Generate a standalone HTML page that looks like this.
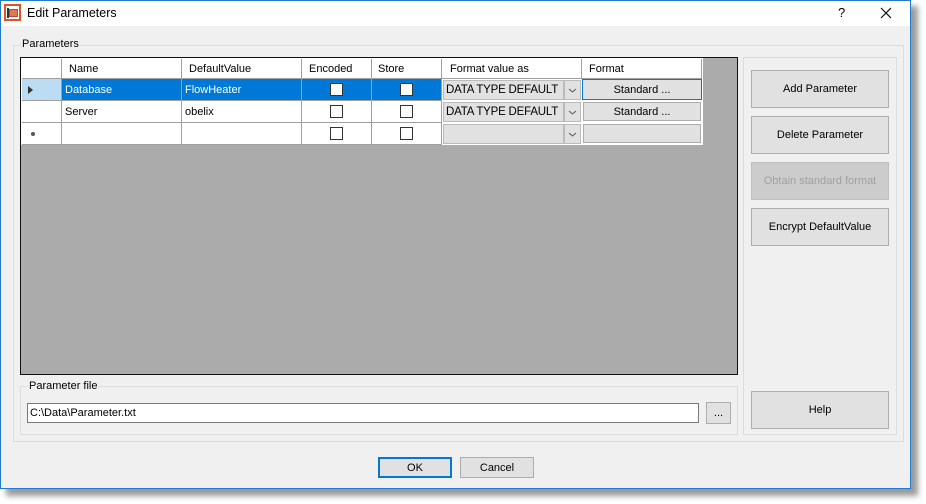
<!DOCTYPE html>
<html><head><style>
*{box-sizing:border-box;margin:0;padding:0}
body{width:926px;height:504px;background:#fff;position:relative;overflow:hidden;font-family:"Liberation Sans",sans-serif;font-size:11px;color:#000}
.a{position:absolute;white-space:nowrap}
.btn{position:absolute;background:#e1e1e1;border:1px solid #adadad;display:flex;align-items:center;justify-content:center;font-size:11px;white-space:nowrap}
.cell{position:absolute;border-right:1px solid #a0a0a0;border-bottom:1px solid #a0a0a0;background:#fff;display:flex;align-items:center;padding-left:3px;white-space:nowrap;overflow:hidden}
.cb{position:absolute;width:13px;height:13px;border:1px solid #333;background:#fff}
.grp{position:absolute;border:1px solid #dcdcdc}
.lbl{position:absolute;background:#f0f0f0;padding:0 1px;font-size:11px;line-height:13px}
.dd{position:absolute;width:17px;height:20px;background:#e1e1e1;border:1px solid #bbb}
.cmb{position:absolute;width:121px;height:20px;background:#e1e1e1;border:1px solid #bbb;padding-left:2px;line-height:18px;font-size:11.5px;letter-spacing:-0.2px;white-space:nowrap;overflow:hidden}
</style></head><body>
<div class="a" style="left:6px;top:6px;width:912px;height:490px;background:#9a9a9a;filter:blur(3px)"></div>
<div class="a" style="left:0;top:0;width:911px;height:489px;border:1px solid #1e7ad2;background:#f0f0f0"></div>
<div class="a" style="left:1px;top:1px;width:909px;height:25px;background:#fff"></div>
<div class="a" style="left:4px;top:4px;width:17px;height:17px;border:2px solid #e0532a;background:#fff"></div>
<div class="a" style="left:9px;top:9px;width:9px;height:8px;background:#e0794f;border:1px solid #b44"></div>
<div class="a" style="left:7px;top:8px;width:2px;height:10px;background:#333"></div>
<div class="a" style="left:27px;top:5px;font-size:12.5px;line-height:16px">Edit Parameters</div>
<div class="a" style="left:838px;top:5px;font-size:13px">?</div>
<svg class="a" style="left:880px;top:7px" width="12" height="12"><path d="M1 1L11 11M11 1L1 11" stroke="#111" stroke-width="1.2"/></svg>

<div class="grp" style="left:13px;top:45px;width:891px;height:397px"></div>
<div class="lbl" style="left:21px;top:38px">Parameters</div>

<div class="a" style="left:20px;top:57px;width:718px;height:318px;border:1px solid #111;background:#ababab"></div>
<div class="a" style="left:21px;top:58px;width:682px;height:87px;background:#fff"></div>
<div class="cell" style="left:22px;top:59px;width:40px;height:20px"></div>
<div class="cell" style="left:62px;top:59px;width:120px;height:20px;padding-left:7px">Name</div>
<div class="cell" style="left:182px;top:59px;width:120px;height:20px;padding-left:7px">DefaultValue</div>
<div class="cell" style="left:302px;top:59px;width:70px;height:20px;padding-left:7px">Encoded</div>
<div class="cell" style="left:372px;top:59px;width:70px;height:20px;padding-left:6px">Store</div>
<div class="cell" style="left:442px;top:59px;width:140px;height:20px;padding-left:8px">Format value as</div>
<div class="cell" style="left:582px;top:59px;width:120px;height:20px;padding-left:7px">Format</div>
<div class="cell" style="left:22px;top:79px;width:40px;height:22px;background:#bcdcf4"></div>
<div class="a" style="left:28px;top:86px;width:0;height:0;border-left:5px solid #333;border-top:4px solid transparent;border-bottom:4px solid transparent"></div>
<div class="cell" style="left:62px;top:79px;width:120px;height:22px;background:#0078d7;color:#fff">Database</div>
<div class="cell" style="left:182px;top:79px;width:120px;height:22px;background:#0078d7;color:#fff">FlowHeater</div>
<div class="cell" style="left:302px;top:79px;width:70px;height:22px;background:#0078d7"></div>
<div class="cell" style="left:372px;top:79px;width:70px;height:22px;background:#0078d7"></div>
<div class="cell" style="left:22px;top:101px;width:40px;height:22px"></div>
<div class="cell" style="left:62px;top:101px;width:120px;height:22px">Server</div>
<div class="cell" style="left:182px;top:101px;width:120px;height:22px">obelix</div>
<div class="cell" style="left:302px;top:101px;width:70px;height:22px"></div>
<div class="cell" style="left:372px;top:101px;width:70px;height:22px"></div>
<div class="cell" style="left:22px;top:123px;width:40px;height:22px"></div>
<div class="a" style="left:31px;top:132px;width:4px;height:4px;border-radius:2px;background:#555"></div>
<div class="cell" style="left:62px;top:123px;width:120px;height:22px"></div>
<div class="cell" style="left:182px;top:123px;width:120px;height:22px"></div>
<div class="cell" style="left:302px;top:123px;width:70px;height:22px"></div>
<div class="cell" style="left:372px;top:123px;width:70px;height:22px"></div>
<div class="cb" style="left:330px;top:83px"></div><div class="cb" style="left:400px;top:83px"></div>
<div class="cb" style="left:330px;top:105px"></div><div class="cb" style="left:400px;top:105px"></div>
<div class="cb" style="left:330px;top:127px"></div><div class="cb" style="left:400px;top:127px"></div>
<div class="a" style="left:442px;top:79px;width:140px;height:66px;background:#fff"></div>
<div class="cmb" style="left:443px;top:80px">DATA TYPE DEFAULT</div>
<div class="dd" style="left:564px;top:80px"><svg width="15" height="18"><path d="M4 8L7.5 11L11 8" stroke="#555" fill="none"/></svg></div>
<div class="cmb" style="left:443px;top:102px">DATA TYPE DEFAULT</div>
<div class="dd" style="left:564px;top:102px"><svg width="15" height="18"><path d="M4 8L7.5 11L11 8" stroke="#555" fill="none"/></svg></div>
<div class="cmb" style="left:443px;top:124px"></div>
<div class="dd" style="left:564px;top:124px"><svg width="15" height="18"><path d="M4 8L7.5 11L11 8" stroke="#555" fill="none"/></svg></div>
<div class="a" style="left:582px;top:79px;width:121px;height:66px;background:#fff"></div>
<div class="btn" style="left:582px;top:79px;width:120px;height:21px;border:1px solid #0078d7">Standard ...</div>
<div class="btn" style="left:583px;top:102px;width:118px;height:19px">Standard ...</div>
<div class="btn" style="left:583px;top:124px;width:118px;height:19px"></div>

<div class="grp" style="left:743px;top:57px;width:154px;height:378px"></div>
<div class="btn" style="left:751px;top:70px;width:138px;height:38px">Add Parameter</div>
<div class="btn" style="left:751px;top:116px;width:138px;height:38px">Delete Parameter</div>
<div class="btn" style="left:751px;top:162px;width:138px;height:38px;background:#cccccc;border-color:#bfbfbf;color:#a0a0a0">Obtain standard format</div>
<div class="btn" style="left:751px;top:208px;width:138px;height:38px">Encrypt DefaultValue</div>
<div class="btn" style="left:751px;top:391px;width:138px;height:38px">Help</div>

<div class="grp" style="left:20px;top:386px;width:718px;height:49px"></div>
<div class="lbl" style="left:28px;top:380px">Parameter file</div>
<div class="a" style="left:27px;top:403px;width:672px;height:20px;border:1px solid #7a7a7a;background:#fff;padding-left:2px;line-height:18px">C:\Data\Parameter.txt</div>
<div class="btn" style="left:706px;top:402px;width:25px;height:22px">...</div>

<div class="btn" style="left:378px;top:457px;width:74px;height:21px;border:2px solid #0078d7">OK</div>
<div class="btn" style="left:460px;top:457px;width:74px;height:21px">Cancel</div>
</body></html>
